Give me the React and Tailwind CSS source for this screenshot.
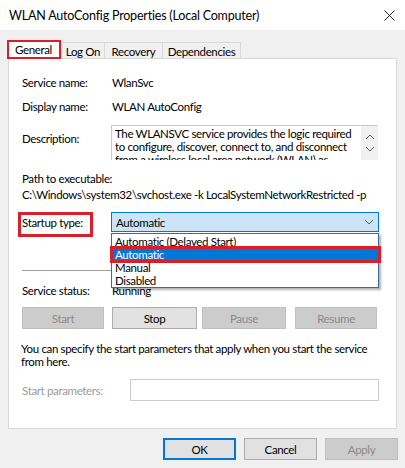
import React from 'react';

const font = { fontFamily: 'Lato, "Noto Sans", sans-serif' };

function Btn({ children, disabled, primary, className = '' }) {
  const tone = disabled
    ? 'bg-[#cccccc] border border-[#bfbfbf] text-[#8a8a8a]'
    : primary
      ? 'bg-[#e1e1e1] border-2 border-[#0078d7] text-black'
      : 'bg-[#e1e1e1] border border-[#adadad] text-black';
  return (
    <div className={`h-[22px] flex items-center justify-center ${tone} ${className}`}>
      {children}
    </div>
  );
}

function Chevron({ className = '' }) {
  return (
    <svg width="10" height="6" viewBox="0 0 10 6" className={className}>
      <path d="M1 1 L5 5 L9 1" fill="none" stroke="#606060" strokeWidth="1" />
    </svg>
  );
}

export default function App() {
  return (
    <div className="relative w-[405px] h-[468px] bg-[#f0f0f0] overflow-hidden text-black text-[11.5px] tracking-[-0.35px] leading-[13px]" style={font}>
      {/* Title bar */}
      <div className="h-[30px] bg-white flex items-center justify-between pl-[9px] pr-[10px]">
        <span className="text-[12.5px] tracking-[-0.2px]">WLAN AutoConfig Properties (Local Computer)</span>
        <svg width="11" height="11" viewBox="0 0 11 11">
          <path d="M0.5 0.5 L10.5 10.5 M10.5 0.5 L0.5 10.5" stroke="#222" strokeWidth="1" />
        </svg>
      </div>

      {/* Tabs */}
      <div className="mt-[10px] ml-[7px] flex items-end h-[19px] relative z-10">
        <div className="h-[19px] w-[54px] bg-white border-2 border-[#d7202c] flex items-center pl-[6px]">General</div>
        <div className="h-[17px] w-[44px] border border-[#d9d9d9] border-b-0 flex items-center justify-center">Log On</div>
        <div className="h-[17px] w-[58px] border border-[#d9d9d9] border-l-0 border-b-0 flex items-center justify-center">Recovery</div>
        <div className="h-[17px] w-[78px] border border-[#d9d9d9] border-l-0 border-b-0 flex items-center justify-center">Dependencies</div>
      </div>

      {/* Panel */}
      <div className="relative ml-[8px] w-[389px] h-[371px] -mt-[1px] bg-white border border-[#d9d9d9] pt-[11px] pl-[13px] pr-[17px]">
        <div className="flex items-center h-[24px]">
          <span className="w-[90px]">Service name:</span>
          <span>WlanSvc</span>
        </div>
        <div className="flex items-center h-[24px]">
          <span className="w-[90px]">Display name:</span>
          <span>WLAN AutoConfig</span>
        </div>

        <div className="flex mt-[7px]">
          <span className="w-[89px] pt-[7px]">Description:</span>
          <div className="flex w-[267px] h-[35px] border-t border-l border-[#c8c8c8] bg-white">
            <div className="flex-1 overflow-hidden pl-[3px] pt-[1px] leading-[13px] whitespace-nowrap">
              The WLANSVC service provides the logic required<br />
              to configure, discover, connect to, and disconnect<br />
              from a wireless local area network (WLAN) as
            </div>
            <div className="w-[17px] bg-[#f0f0f0] flex flex-col items-center justify-center gap-[6px]">
              <Chevron className="rotate-180" />
              <Chevron />
            </div>
          </div>
        </div>

        <div className="h-[16px] mt-[10px] flex items-center">Path to executable:</div>
        <div className="h-[16px] flex items-center whitespace-nowrap">C:\Windows\system32\svchost.exe -k LocalSystemNetworkRestricted -p</div>

        <div className="flex items-center mt-[10px] h-[20px]">
          <span className="w-[89px] whitespace-nowrap">Startup type:</span>
          <div className="w-[268px] h-[20px] bg-[#cce4f7] border border-[#0078d7] flex items-center justify-between pl-[4px] pr-[4px]">
            <span>Automatic</span>
            <Chevron />
          </div>
        </div>

        <div className="mt-[38px] h-px bg-[#a0a0a0] w-[356px]" />

        <div className="flex items-center h-[16px] mt-[11px]">
          <span className="w-[90px]">Service status:</span>
          <span>Running</span>
        </div>

        <div className="flex mt-[9px] gap-[8px]">
          <Btn disabled className="w-[82px]">Start</Btn>
          <Btn className="w-[85px]">Stop</Btn>
          <Btn disabled className="w-[84px] ml-[-3px]">Pause</Btn>
          <Btn disabled className="w-[82px] ml-[1px]">Resume</Btn>
        </div>

        <div className="mt-[14px] -ml-[1px] leading-[12.5px] whitespace-nowrap">
          You can specify the start parameters that apply when you start the service<br />
          from here.
        </div>

        <div className="flex items-center mt-[11px]">
          <span className="w-[108px] text-[#9a9a9a]">Start parameters:</span>
          <div className="w-[249px] h-[22px] border border-[#cccccc] bg-white" />
        </div>

        {/* Dropdown list */}
        <div className="absolute left-[102px] top-[174px] w-[268px] h-[55px] bg-white border border-[#3d6a9c] shadow-[2px_2px_2px_rgba(0,0,0,0.3)] z-20">
          <div className="h-[13px] flex items-center pl-[3px] mt-[1px]">Automatic (Delayed Start)</div>
          <div className="h-[13px] flex items-center pl-[3px] bg-[#0078d7] text-white">Automatic</div>
          <div className="h-[13px] flex items-center pl-[3px]">Manual</div>
          <div className="h-[13px] flex items-center pl-[3px]">Disabled</div>
        </div>
        <div className="absolute left-[101px] top-[187px] w-[271px] h-[17px] border-[3px] border-[#d7202c] z-30" />

        {/* Startup label highlight */}
        <div className="absolute left-[9px] top-[153px] w-[75px] h-[25px] border-[3px] border-[#d7202c]" />
      </div>

      {/* Bottom buttons */}
      <div className="flex justify-end gap-[8px] mt-[9px] pr-[7px]">
        <Btn primary className="w-[73px]">OK</Btn>
        <Btn className="w-[73px]">Cancel</Btn>
        <Btn disabled className="w-[73px]">Apply</Btn>
      </div>
    </div>
  );
}
